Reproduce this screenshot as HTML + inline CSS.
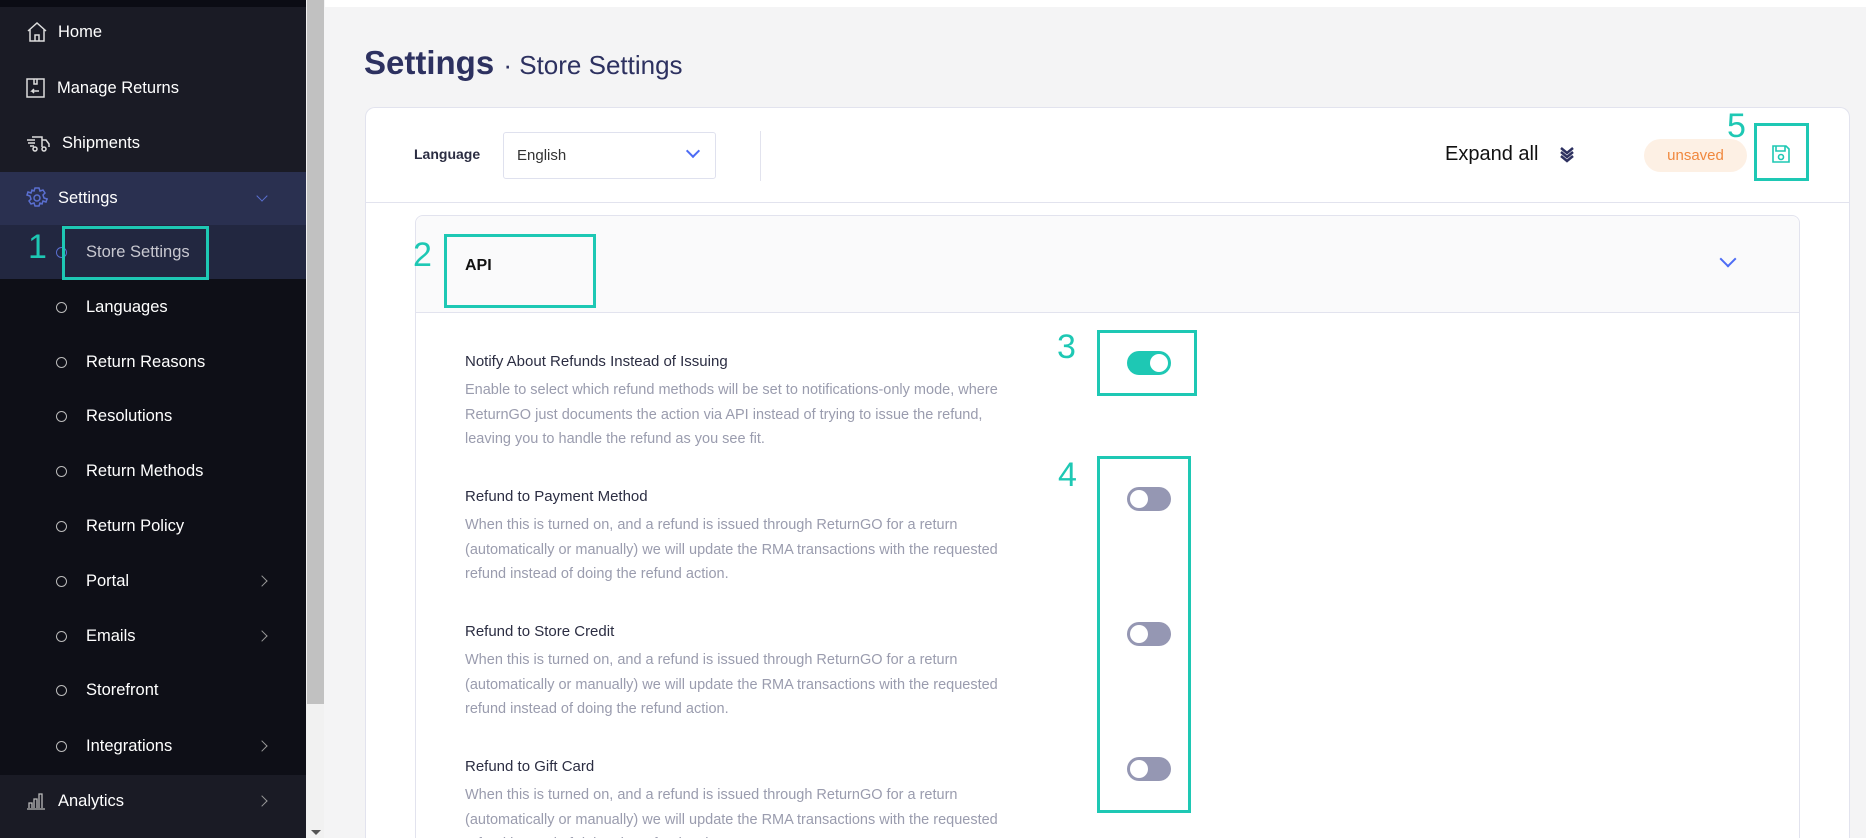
<!DOCTYPE html>
<html style="width:1866px;height:838px;overflow:hidden"><head><meta charset="utf-8"><style>
*{margin:0;padding:0;box-sizing:border-box}
body{width:1866px;height:838px;overflow:hidden;background:#f4f4f5;font-family:"Liberation Sans",sans-serif;position:relative}
.a{position:absolute}
.sb{left:0;top:0;width:306px;height:838px;background:#1a1b25}
.it{position:absolute;left:0;width:306px;color:#fff;font-size:16.5px;display:flex;align-items:center}
.ic{position:absolute;left:26px}
.sub .dot{position:absolute;left:56px;width:11px;height:11px;border:1.5px solid #bbb;border-radius:50%}
.sub span{position:absolute;left:86px}
.chev{position:absolute;left:258px;width:8px;height:8px;border-top:1.5px solid #999;border-right:1.5px solid #999;transform:rotate(45deg)}
.teal{border:3px solid #1ec8b4;position:absolute}
.num{position:absolute;color:#1ec8b4;font-size:34px}
.tg{position:absolute;left:1127px;width:44px;height:24px;border-radius:12px;background:#9597b3}
.tg::after{content:"";position:absolute;left:3px;top:3px;width:18px;height:18px;border-radius:50%;background:#fff}
.tg.on{background:#1ec8b4}.tg.on::after{left:23px}
.t{position:absolute;left:465px;font-size:15px;color:#2b2d42}
.d{position:absolute;left:465px;font-size:14.5px;color:#9a9cae;line-height:24.5px;width:555px}
</style></head><body>
<div class="a sb"></div>
<div class="a" style="left:0;top:0;width:306px;height:7px;background:#0b0c14"></div>
<div class="a" style="left:0;top:225px;width:306px;height:550px;background:#0e0f17"></div>
<div class="a" style="left:0;top:172px;width:306px;height:53px;background:#2a3050"></div>
<div class="a" style="left:0;top:225px;width:306px;height:54px;background:#222740"></div>
<div class="it" style="top:20px;height:24px"><svg class="ic" width="22" height="22" viewBox="0 0 22 22" fill="none" stroke="#ddd" stroke-width="1.5"><path d="M2 10L11 2l9 8M4 8v12h14V8M9 20v-6h4v6"/></svg><span style="position:absolute;left:58px">Home</span></div>
<div class="it" style="top:76px;height:24px"><svg class="ic" width="20" height="22" viewBox="0 0 20 22" fill="none" stroke="#ddd" stroke-width="1.5"><rect x="1" y="2" width="17" height="18"/><path d="M8 2v5h3V2M13 14H6l2-2M6 14l2 2"/></svg><span style="position:absolute;left:57px">Manage Returns</span></div>
<div class="it" style="top:131px;height:24px"><svg class="ic" width="24" height="20" viewBox="0 0 24 20" fill="none" stroke="#ddd" stroke-width="1.5"><path d="M6 4h10v10M16 7h4l3 4v3M1 7h8M2 10h7M4 13h4"/><circle cx="9" cy="16" r="2"/><circle cx="18" cy="16" r="2"/></svg><span style="position:absolute;left:62px">Shipments</span></div>
<div class="it" style="top:186px;height:24px"><svg class="ic" width="22" height="22" viewBox="0 0 22 22" fill="none" stroke="#5a6fd0" stroke-width="1.5"><circle cx="11" cy="11" r="3"/><path d="M9 1h4l1 3 3-1 2 3-2 2 1 3 3 1v-1 1l-1 3-3-1-1 3-2-1-1 3H9l-1-3-3 1-2-3 2-2-1-3-3-1 1-3 3 1 1-3 2 1z"/></svg><span style="position:absolute;left:58px">Settings</span><div class="chev" style="transform:rotate(135deg);top:6px;border-color:#5a6fd0"></div></div>
<div class="it sub" style="top:240px;height:24px;color:#c8c8d0"><div class="dot" style="top:7px;border-color:#5a6fd0"></div><span>Store Settings</span></div>
<div class="it sub" style="top:295px;height:24px"><div class="dot" style="top:7px"></div><span>Languages</span></div>
<div class="it sub" style="top:350px;height:24px"><div class="dot" style="top:7px"></div><span>Return Reasons</span></div>
<div class="it sub" style="top:404px;height:24px"><div class="dot" style="top:7px"></div><span>Resolutions</span></div>
<div class="it sub" style="top:459px;height:24px"><div class="dot" style="top:7px"></div><span>Return Methods</span></div>
<div class="it sub" style="top:514px;height:24px"><div class="dot" style="top:7px"></div><span>Return Policy</span></div>
<div class="it sub" style="top:569px;height:24px"><div class="dot" style="top:7px"></div><span>Portal</span><div class="chev" style="top:8px"></div></div>
<div class="it sub" style="top:624px;height:24px"><div class="dot" style="top:7px"></div><span>Emails</span><div class="chev" style="top:8px"></div></div>
<div class="it sub" style="top:678px;height:24px"><div class="dot" style="top:7px"></div><span>Storefront</span></div>
<div class="it sub" style="top:734px;height:24px"><div class="dot" style="top:7px"></div><span>Integrations</span><div class="chev" style="top:8px"></div></div>
<div class="it" style="top:789px;height:24px"><svg class="ic" width="20" height="18" viewBox="0 0 20 18" fill="none" stroke="#bbb" stroke-width="1.3"><path d="M1 17h18M3 16v-5h3v5M8 16V7h3v9M13 16V2h3v14"/></svg><span style="position:absolute;left:58px">Analytics</span><div class="chev" style="top:8px"></div></div>
<div class="teal" style="left:62px;top:226px;width:147px;height:54px"></div>
<div class="num" style="left:28px;top:228px">1</div>
<div class="a" style="left:306px;top:0;width:18px;height:838px;background:#f1f1f1"></div>
<div class="a" style="left:307px;top:0;width:17px;height:704px;background:#c1c1c1"></div>
<div class="a" style="left:311px;top:830px;border-left:5px solid transparent;border-right:5px solid transparent;border-top:5px solid #555"></div>
<div class="a" style="left:325px;top:0;width:1541px;height:7px;background:#fff"></div>
<div class="a" style="left:364px;top:44px;font-size:33px;font-weight:bold;color:#2d3160">Settings <span style="font-weight:normal;font-size:26px">· Store Settings</span></div>
<div class="a" style="left:365px;top:107px;width:1485px;height:731px;background:#fff;border:1px solid #e2e3ee;border-bottom:none;border-radius:10px 10px 0 0"></div>
<div class="a" style="left:365px;top:202px;width:1485px;height:1px;background:#e2e3ee"></div>
<div class="a" style="left:414px;top:146px;font-size:14px;font-weight:bold;color:#2b2d42">Language</div>
<div class="a" style="left:503px;top:132px;width:213px;height:47px;border:1px solid #dfe1ee;border-radius:3px"><span class="a" style="left:13px;top:14px;font-size:15px;color:#333">English</span><div class="a" style="left:184px;top:13px;width:10px;height:10px;border-right:2.5px solid #4d6cf5;border-bottom:2.5px solid #4d6cf5;transform:rotate(45deg)"></div></div>
<div class="a" style="left:760px;top:131px;width:1px;height:50px;background:#e2e3ee"></div>
<div class="a" style="left:1445px;top:143px;font-size:20px;color:#111">Expand all</div>
<svg class="a" style="left:1558px;top:145px" width="18" height="18" viewBox="0 0 18 18" fill="none" stroke="#2d3160" stroke-width="2.5"><path d="M3 3l6 5 6-5M3 7l6 5 6-5M3 11l6 5 6-5"/></svg>
<div class="a" style="left:1644px;top:139px;width:103px;height:33px;border-radius:17px;background:#fdf0e4;color:#f0883e;font-size:15px;text-align:center;line-height:33px">unsaved</div>
<div class="teal" style="left:1754px;top:123px;width:55px;height:58px"></div>
<svg class="a" style="left:1771px;top:144px" width="20" height="20" viewBox="0 0 20 20" fill="none" stroke="#1ec8b4" stroke-width="1.6"><path d="M2 2h13l3 3v13H2zM5 2v5h9V2"/><circle cx="10" cy="13" r="2.5"/></svg>
<div class="num" style="left:1727px;top:107px">5</div>
<div class="a" style="left:415px;top:215px;width:1385px;height:623px;background:#fff;border:1px solid #e2e3ee;border-bottom:none;border-radius:8px 8px 0 0"></div>
<div class="a" style="left:416px;top:216px;width:1383px;height:97px;background:#fafafb;border-radius:8px 8px 0 0;border-bottom:1px solid #e2e3ee"></div>
<div class="a" style="left:465px;top:257px;font-size:16px;font-weight:bold;color:#111">API</div>
<div class="teal" style="left:444px;top:234px;width:152px;height:74px"></div>
<div class="num" style="left:413px;top:236px">2</div>
<div class="a" style="left:1722px;top:253px;width:12px;height:12px;border-right:2.5px solid #4d6cf5;border-bottom:2.5px solid #4d6cf5;transform:rotate(45deg)"></div>
<div class="t" style="top:353px">Notify About Refunds Instead of Issuing</div>
<div class="d" style="top:378px;width:565px">Enable to select which refund methods will be set to notifications-only mode, where ReturnGO just documents the action via API instead of trying to issue the refund, leaving you to handle the refund as you see fit.</div>
<div class="t" style="top:488px">Refund to Payment Method</div>
<div class="d" style="top:513px">When this is turned on, and a refund is issued through ReturnGO for a return (automatically or manually) we will update the RMA transactions with the requested refund instead of doing the refund action.</div>
<div class="t" style="top:623px">Refund to Store Credit</div>
<div class="d" style="top:648px">When this is turned on, and a refund is issued through ReturnGO for a return (automatically or manually) we will update the RMA transactions with the requested refund instead of doing the refund action.</div>
<div class="t" style="top:758px">Refund to Gift Card</div>
<div class="d" style="top:783px;height:55px;overflow:hidden">When this is turned on, and a refund is issued through ReturnGO for a return (automatically or manually) we will update the RMA transactions with the requested refund instead of doing the refund action.</div>
<div class="tg on" style="top:351px"></div>
<div class="tg" style="top:487px"></div>
<div class="tg" style="top:622px"></div>
<div class="tg" style="top:757px"></div>
<div class="teal" style="left:1097px;top:330px;width:100px;height:66px"></div>
<div class="num" style="left:1057px;top:328px">3</div>
<div class="teal" style="left:1097px;top:456px;width:94px;height:357px"></div>
<div class="num" style="left:1058px;top:456px">4</div>
</body></html>
